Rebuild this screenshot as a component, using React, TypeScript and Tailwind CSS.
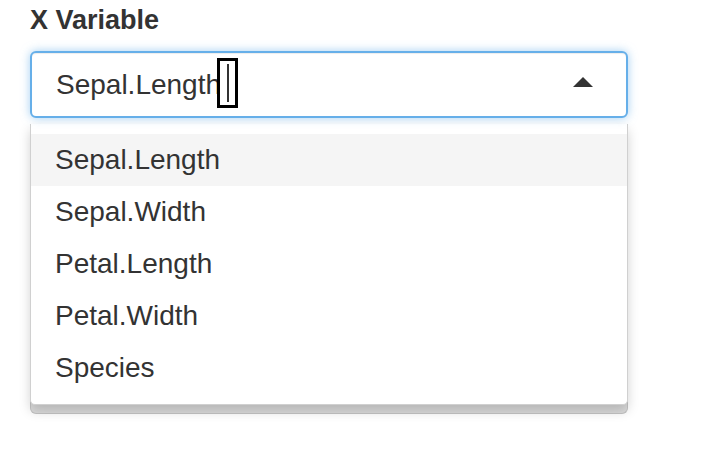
import React from "react";

const options = ["Sepal.Length", "Sepal.Width", "Petal.Length", "Petal.Width", "Species"];

export default function App() {
  return (
    <div
      className="min-h-[466px] w-[718px] bg-white pl-[30px] pt-[4px] text-[#333]"
      style={{ fontFamily: '"Liberation Sans", Arial, sans-serif' }}
    >
      <label className="block h-[32px] text-[27px] font-bold leading-[32px]">X Variable</label>

      <div className="mt-[15px] w-[598px]">
        {/* selected value input */}
        <div className="relative flex h-[67px] items-center rounded-[6px] border-2 border-[#66afe9] bg-white pl-[24px] shadow-[inset_0_1px_1px_rgba(0,0,0,0.075),0_0_10px_rgba(102,175,233,0.6)]">
          <span className="whitespace-nowrap text-[28px] leading-none">Sepal.Length</span>
          <div className="absolute left-[185px] top-[5px] flex h-[50px] w-[21px] items-center justify-center border-[3px] border-black bg-white">
            <div className="h-[38px] w-[2px] bg-[#333]" />
          </div>
          <svg className="absolute right-[33px] top-[24px]" width="20" height="10" viewBox="0 0 20 10">
            <path d="M0 10 L10 0 L20 10 Z" fill="#333" />
          </svg>
        </div>

        {/* dropdown */}
        <div className="mt-[6px] rounded-b-[6px] border border-t-0 border-[#c4c4c4] bg-[#dcdcdc] pb-[8px]">
          <div className="-mx-px rounded-b-[5px] border border-t-0 border-[#d0d0d0] bg-white py-[10px] shadow-[0_6px_12px_rgba(0,0,0,0.175)]">
            {options.map((o, i) => (
              <div
                key={o}
                className={`flex h-[52px] items-center pl-[24px] text-[28px] ${i === 0 ? "bg-[#f5f5f5]" : ""}`}
              >
                {o}
              </div>
            ))}
          </div>
        </div>
      </div>
    </div>
  );
}
